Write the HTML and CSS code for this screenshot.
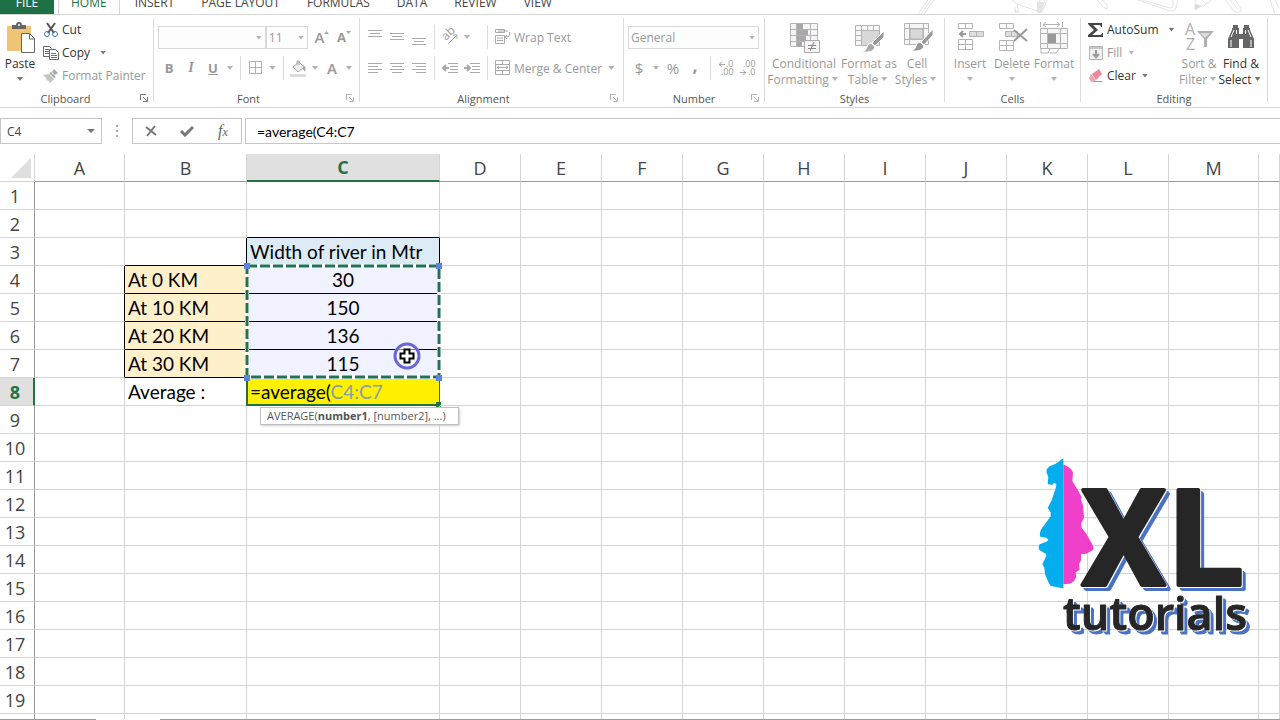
FILE: index.html
```
<!DOCTYPE html>
<html lang="en">

<head>
  <meta charset="UTF-8" />
  <title>Average width of river</title>
  <link rel="stylesheet" href="styles.css">
</head>

<body>
  <!-- tabs -->
  <nav class="tabs">
    <a href="#" class="file">FILE</a>
    <a href="#" class="active">HOME</a>
    <a href="#">INSERT</a>
    <a href="#">PAGE LAYOUT</a>
    <a href="#">FORMULAS</a>
    <a href="#">DATA</a>
    <a href="#">REVIEW</a>
    <a href="#">VIEW</a>
    <svg class="doodle" width="380" height="14" viewBox="0 0 380 14" fill="none" stroke="#e4e4e4">
      <path d="M18 14L28 0M21 14L31 0M24 14L34 0" />
      <path d="M112 0l5 4 20 7 3-11M137 12h5l5-12M141 12l4-12M117 4l2 9" />
      <path d="M114 6l4 7h-3z M137 2l7 0-3 11h-4z" fill="#e4e4e4" stroke="none" />
      <path d="M197 0l6 7 4 2v-4l-5-5" />
      <path d="M238 0l32 11q5 1 6-3l2-8M242 0l28 8q3 0 3-2V0" />
      <path d="M296 0l-1 9 13-6 3-3M302 0l4 4" />
      <path d="M295 4l6 2-6 4z" fill="#d8d8d8" />
      <path d="M325 0l9 11q4 3 7 0V8l-6-8M330 0l8 9M370 0l5 14M375 0l4 8" />
    </svg>
  </nav>

  <!-- ribbon -->
  <div class="ribbon">
    <section class="group clipboard">
      <div class="body">
        <button class="big paste">
          <svg width="30" height="32" viewBox="0 0 30 32">
            <path d="M2 4h24v25H2z" fill="#f0c477" />
            <path d="M7 7V3h4q0-3 3-3t3 3h4v4z" fill="#666" />
            <circle cx="14" cy="3" r="1" fill="#fff" />
            <path d="M16.500 11.500h8l5 5v14h-13z" fill="#fff" stroke="#666" />
            <path d="M24.500 12v5h5" fill="none" stroke="#666" />
          </svg>
          <span>Paste</span><i></i>
        </button>
        <div class="stack">
          <button class="line">
            <svg width="16" height="16" viewBox="0 0 16 16" fill="none">
              <path d="M4 1l7 10M12 1L5 11" stroke="#555" stroke-width="2" />
              <circle cx="4" cy="12" r="2.5" stroke="#3f72b5" />
              <circle cx="12" cy="12" r="2.5" stroke="#3f72b5" />
            </svg>Cut
          </button>
          <button class="line">
            <svg width="16" height="16" viewBox="0 0 16 16" fill="#fff" stroke="#666">
              <path d="M.5 1.500h6l2 2v8h-8z M2 4.500h4M2 6.500h4M2 8.500h4" />
              <path d="M6.500 4.500h6l3 3v7h-9z" />
              <path d="M8 8.500h5M8 10.500h6M8 12.500h6" stroke="#4a80b0" />
            </svg>Copy<i class="far"></i>
          </button>
          <button class="line" disabled>
            <svg width="16" height="16" viewBox="0 0 16 16" fill="#aaa">
              <path d="M9 4l2-3 4 4-3 2z M8 4l5 5-2 1-5-5z" />
              <path d="M0 7l6-1 5 5-4 4-2-3-1 1-1-3z" fill="#c4c4c4" />
            </svg>Format Painter
          </button>
        </div>
      </div>
      <h2>Clipboard</h2>
      <svg class="launch on" width="8" height="8" viewBox="0 0 8 8"><path d="M.5 6V.5H6M3 3l4 4M7.500 3v4.500H3" /></svg>
    </section>

    <section class="group font">
      <div class="rows">
        <div class="row">
          <label class="combo name"><select aria-label="Font" disabled><option></option></select></label>
          <label class="combo size"><select aria-label="Font size" disabled><option>11</option></select></label>
          <button class="ib gap" disabled aria-label="Increase font size"><b class="grow">A</b><svg width="5" height="12" viewBox="0 0 5 12"><path d="M0 3l2.500-3L5 3z" fill="#aaa" /></svg></button>
          <button class="ib" disabled aria-label="Decrease font size"><b>A</b><svg width="5" height="12" viewBox="0 0 5 12"><path d="M0 0h5L2.500 3z" fill="#aaa" /></svg></button>
        </div>
        <div class="row">
          <button class="ib" disabled><b>B</b></button>
          <button class="ib" disabled><em>I</em></button>
          <button class="ib" disabled><u>U</u></button><i></i>
          <hr>
          <button class="ib" disabled aria-label="Borders">
            <svg width="14" height="14" viewBox="0 0 14 14" fill="none" stroke="#b0b0b0"><path d="M.5.5h12v12H.5zM6.500 0v13M0 6.500h13" /></svg>
          </button><i></i>
          <hr>
          <button class="ib" disabled aria-label="Fill color">
            <svg width="17" height="17" viewBox="0 0 17 17"><path d="M3 7l6-5 5 5-6 5z M7 5V1h2v4" fill="#eee" stroke="#aaa" /><path d="M13 5q4 2 2 7l-2-3z" fill="#aaa" /><path d="M0 14h16v3H0z" fill="#dcdcdc" /></svg>
          </button><i></i>
          <button class="ib" disabled><b class="grow">A</b></button><i></i>
        </div>
      </div>
      <h2>Font</h2>
      <svg class="launch" width="8" height="8" viewBox="0 0 8 8"><path d="M.5 6V.5H6M3 3l4 4M7.500 3v4.500H3" /></svg>
    </section>

    <section class="group alignment">
      <div class="rows">
        <div class="row">
          <button class="ib" disabled aria-label="Top align"><svg class="ln" width="14" height="16" viewBox="0 0 14 16"><path d="M0 1.500h14M2 4.500h10M0 7.500h14" /></svg></button>
          <button class="ib" disabled aria-label="Middle align"><svg class="ln" width="14" height="16" viewBox="0 0 14 16"><path d="M0 4.500h14M2 7.500h10M0 10.500h14" /></svg></button>
          <button class="ib" disabled aria-label="Bottom align"><svg class="ln" width="14" height="16" viewBox="0 0 14 16"><path d="M0 9.500h14M2 12.500h10M0 15.500h14" /></svg></button>
          <hr>
          <button class="ib" disabled aria-label="Orientation">
            <svg class="ln ab" width="16" height="16" viewBox="0 0 16 16"><text x="4" y="12" transform="rotate(-45 4 12)">ab</text><path d="M6 15l9-9M11 6h4v4" /></svg>
          </button><i class="wide"></i>
          <hr>
          <button class="line" disabled>
            <svg class="ln" width="16" height="16" viewBox="0 0 16 16"><path d="M.5.5h9v3h-9zM3 2h10M.5 6.500h9v8h-9zM2 9h6M2 11.500h6M14.500 3v3q0 2-4 2M12 6l-2 2 2 2" /></svg>Wrap Text
          </button>
        </div>
        <div class="row">
          <button class="ib" disabled aria-label="Align left"><svg class="ln" width="14" height="12" viewBox="0 0 14 12"><path d="M0 1.500h14M0 4.500h10M0 7.500h14M0 10.500h10" /></svg></button>
          <button class="ib" disabled aria-label="Center"><svg class="ln" width="14" height="12" viewBox="0 0 14 12"><path d="M0 1.500h14M2 4.500h10M0 7.500h14M2 10.500h10" /></svg></button>
          <button class="ib" disabled aria-label="Align right"><svg class="ln" width="14" height="12" viewBox="0 0 14 12"><path d="M0 1.500h14M4 4.500h10M0 7.500h14M4 10.500h10" /></svg></button>
          <hr>
          <button class="ib" disabled aria-label="Decrease indent"><svg class="ln" width="16" height="12" viewBox="0 0 16 12"><path d="M6 1.500h10M8 4.500h8M8 7.500h8M6 10.500h10" /><path d="M7 6H1M4 3L1 6l3 3" stroke-width="2" /></svg></button>
          <button class="ib" disabled aria-label="Increase indent"><svg class="ln" width="16" height="12" viewBox="0 0 16 12"><path d="M6 1.500h10M8 4.500h8M8 7.500h8M6 10.500h10" /><path d="M0 6h6M3 3l3 3-3 3" stroke-width="2" /></svg></button>
          <hr>
          <button class="line" disabled>
            <svg class="ln" width="16" height="16" viewBox="0 0 16 16"><path d="M.5.5h14v14H.5zM0 4.500h15M0 10.500h15M7.500 0v4M7.500 11v4M2 7.500h11M4 6L2 7.500 4 9M11 6l2 1.500L11 9" /></svg>Merge &amp; Center<i></i>
          </button>
        </div>
      </div>
      <h2>Alignment</h2>
      <svg class="launch" width="8" height="8" viewBox="0 0 8 8"><path d="M.5 6V.5H6M3 3l4 4M7.500 3v4.500H3" /></svg>
    </section>

    <section class="group number">
      <div class="rows">
        <div class="row">
          <label class="combo format"><select aria-label="Number format" disabled><option>General</option></select></label>
        </div>
        <div class="row">
          <button class="ib sym" disabled>$</button><i></i>
          <button class="ib sym" disabled>%</button>
          <button class="ib comma" disabled>,</button>
          <hr>
          <button class="ib" disabled aria-label="Increase decimal">
            <svg class="ln" width="16" height="16" viewBox="0 0 16 16"><path d="M1 4.500h6M4 2L1 4.500 4 7" /><text x="8" y="7">.0</text><text x="3" y="15">.00</text></svg>
          </button>
          <button class="ib" disabled aria-label="Decrease decimal">
            <svg class="ln" width="16" height="16" viewBox="0 0 16 16"><text x="3" y="7">.00</text><path d="M0 12.500h6M3 10l3 2.500L3 15" /><text x="8" y="15">.0</text></svg>
          </button>
        </div>
      </div>
      <h2>Number</h2>
      <svg class="launch" width="8" height="8" viewBox="0 0 8 8"><path d="M.5 6V.5H6M3 3l4 4M7.500 3v4.500H3" /></svg>
    </section>

    <section class="group styles">
      <div class="body">
        <button class="big w70" disabled>
          <svg width="32" height="32" viewBox="0 0 32 32" fill="#f6f4f6" stroke="#b4b4b4">
            <path d="M2.500 1.500h27v23h-27zM8.500 1v24M22.500 1v24M2 7.500h27M2 13.500h27M2 19.500h27" />
            <path d="M9 2h6v5H9zM9 8h11v5H9zM9 14h9v5H9zM9 20h5v5H9z" fill="#a8a8a8" stroke="none" />
            <path d="M16.500 18.500h15v12h-15z" stroke="#aaa" />
            <path d="M20 23.500h8M20 26.500h8M26 20l-4 9" stroke="#888" />
          </svg>
          <span>Conditional<br>Formatting<i></i></span>
        </button>
        <button class="big w54" disabled>
          <svg width="32" height="32" viewBox="0 0 32 32" fill="#f6f6f6" stroke="#b4b4b4">
            <path d="M2.500 3.500h24v20h-24zM8.500 3v21M14.500 3v21M20.500 3v21M2 8.500h25M2 13.500h25M2 18.500h25" />
            <path d="M9 9h17v14H9z" fill="#d8d8d8" stroke="none" />
            <path d="M31 9v6l-9 9-3-3z" fill="#999" stroke="#fff" />
            <path d="M18 21l4 4q-1 6-13 5 5-2 5-5 0-3 4-4z" fill="#aaa" stroke="#fff" />
          </svg>
          <span>Format as<br>Table<i></i></span>
        </button>
        <button class="big w42" disabled>
          <svg width="32" height="32" viewBox="0 0 32 32" fill="#f6f6f6" stroke="#b4b4b4">
            <path d="M3.500 1.500h24v21h-24zM8.500 1v21M22.500 1v21M3 6.500h24M3 17.500h24" />
            <path d="M9 7h13v10H9z" fill="#d8d8d8" />
            <path d="M32 7v6l-9 10-3-3z" fill="#999" stroke="#fff" />
            <path d="M19 20l4 4q-1 6-13 5 5-2 5-5 0-3 4-4z" fill="#999" stroke="#fff" />
          </svg>
          <span>Cell<br>Styles<i></i></span>
        </button>
      </div>
      <h2>Styles</h2>
    </section>

    <section class="group cells">
      <div class="body">
        <button class="big w42" disabled>
          <svg width="32" height="32" viewBox="0 0 32 32" fill="#fff" stroke="#b4b4b4">
            <path d="M4.500 1.500h14v5h-14zM11.500 1v6M4.500 17.500h14v10h-14zM11.500 17v11M4 22.500h15" />
            <path d="M15.500 9.500h14v5h-14zM22.500 9v6" fill="#ddd" />
            <path d="M12 12H6M9 9l-3 3 3 3" fill="none" stroke="#999" stroke-width="2" />
          </svg>
          <span>Insert</span><i></i>
        </button>
        <button class="big w42" disabled>
          <svg width="32" height="32" viewBox="0 0 32 32" fill="#fff" stroke="#b4b4b4">
            <path d="M3.500 1.500h14v5h-14zM10.500 1v6M3.500 18.500h14v10h-14zM10.500 18v11M3 23.500h15" />
            <path d="M9.500 9.500h12v5h-12zM15.500 9v6" fill="#ddd" />
            <path d="M18 8l13 11M31 7L18 19" fill="none" stroke="#999" stroke-width="2" />
          </svg>
          <span>Delete</span><i></i>
        </button>
        <button class="big w42" disabled>
          <svg width="32" height="32" viewBox="0 0 32 32" fill="#f6f6f6" stroke="#b4b4b4">
            <path d="M2.500 6.500h27v20h-27zM9.500 6v20M22.500 6v20M2 11.500h27M2 21.500h27" />
            <path d="M10 12h8v9h-8z" fill="#999" stroke="none" />
            <path d="M2.500 0v5M24.500 0v5M5 2.500h17M8 0L5 2.500 8 5M19 0l3 2.500L19 5M3 27v4h7l2-4M12 31h6l3-4" fill="none" />
          </svg>
          <span>Format</span><i></i>
        </button>
      </div>
      <h2>Cells</h2>
    </section>

    <section class="group editing">
      <div class="body">
        <div class="stack">
          <button class="line">
            <svg width="16" height="16" viewBox="0 0 16 16"><path d="M0 1h14v4h-1q0-2-2-2H5l5 5-6 5h8q2 0 2-2h1v4H0v-2l6-5-6-6z" fill="#444" /></svg>AutoSum<i class="far"></i>
          </button>
          <button class="line" disabled>
            <svg width="16" height="16" viewBox="0 0 16 16" fill="#f2f2f2" stroke="#b4b4b4"><path d="M1.500 1.500h13v13h-13z" /><path d="M2 2h12v2H2z" fill="#c8c8c8" stroke="none" /><path d="M8 5v7M5 9l3 3 3-3" fill="none" stroke="#999" stroke-width="2" /></svg>Fill<i></i>
          </button>
          <button class="line">
            <svg width="16" height="16" viewBox="0 0 16 16"><path d="M4 6l7-5 3 5-6 6z" fill="#e88b9a" /><path d="M3 6l5 6-2 2H3l-2-4z" fill="#f0a5b0" /><path d="M6 13.500h8" stroke="#999" /></svg>Clear<i></i>
          </button>
        </div>
        <button class="big w42" disabled>
          <svg class="az" width="32" height="32" viewBox="0 0 32 32">
            <text x="2" y="13">A</text><text x="3" y="28">Z</text>
            <path d="M14 9h17l-7 8v8h-3v-8z" fill="#b0b0b0" /><path d="M17 11h10l-5 5z" fill="#ddd" />
          </svg>
          <span>Sort &amp;<br>Filter<i></i></span>
        </button>
        <button class="big w42">
          <svg width="32" height="32" viewBox="0 0 32 32" fill="#666">
            <path d="M3 26V17l4-9V6h1V3h5v3h1v6h4V6h1V3h5v3h1v2l4 9v9H18v-9h-4v9z" />
            <path d="M6 18v7M11.500 8v4M20.500 8v4M26 18v7M9 8l-3 7M23 8l3 7" stroke="#fff" />
          </svg>
          <span>Find &amp;<br>Select<i></i></span>
        </button>
      </div>
      <h2>Editing</h2>
    </section>
  </div>

  <!-- formula bar -->
  <div class="formula-bar">
    <label class="name-box"><input type="text" value="C4" aria-label="Name box"></label>
    <span class="dots"></span>
    <div class="fx">
      <button aria-label="Cancel"><svg width="12" height="12" viewBox="0 0 12 12"><path d="M1 2l10 8M10 1L2 11" stroke="#777" stroke-width="2" /></svg></button>
      <button aria-label="Enter"><svg width="14" height="12" viewBox="0 0 14 12"><path d="M1 6l4 4 8-8" fill="none" stroke="#777" stroke-width="3" /></svg></button>
      <button aria-label="Insert function"><em>f</em><small>x</small></button>
    </div>
    <input class="formula" type="text" value="=average(C4:C7" aria-label="Formula">
  </div>

  <!-- sheet -->
  <main class="sheet">
    <table>
      <colgroup>
        <col class="c-head"><col class="c-a"><col class="c-b"><col class="c-c">
        <col class="c-std" span="9"><col class="c-a"><col>
      </colgroup>
      <thead>
        <tr>
          <th><svg width="20" height="20" viewBox="0 0 20 20"><path d="M20 0v20H0z" fill="#dfdfdf" /></svg></th>
          <th>A</th><th>B</th><th class="on">C</th><th>D</th><th>E</th><th>F</th><th>G</th><th>H</th><th>I</th><th>J</th><th>K</th><th>L</th><th>M</th><th></th>
        </tr>
      </thead>
      <tbody>
        <tr><th>1</th><td></td><td></td><td></td><td></td><td></td><td></td><td></td><td></td><td></td><td></td><td></td><td></td><td></td><td></td></tr>
        <tr><th>2</th><td></td><td></td><td class="bb"></td><td></td><td></td><td></td><td></td><td></td><td></td><td></td><td></td><td></td><td></td><td></td></tr>
        <tr><th>3</th><td></td><td class="bb br"></td><td class="title bb br">Width of river in Mtr</td><td></td><td></td><td></td><td></td><td></td><td></td><td></td><td></td><td></td><td></td><td></td></tr>
        <tr>
          <th>4</th><td class="br"></td><td class="km bb br">At 0 KM</td>
          <td class="val bb br">30
            <svg class="ants">
              <rect class="white" width="100%" height="100%" />
              <rect class="dash" width="100%" height="100%" />
            </svg>
            <span class="knob tl"></span><span class="knob tr"></span><span class="knob bl"></span><span class="knob brt"></span>
          </td>
          <td></td><td></td><td></td><td></td><td></td><td></td><td></td><td></td><td></td><td></td><td></td>
        </tr>
        <tr><th>5</th><td class="br"></td><td class="km bb br">At 10 KM</td><td class="val bb br">150</td><td></td><td></td><td></td><td></td><td></td><td></td><td></td><td></td><td></td><td></td><td></td></tr>
        <tr><th>6</th><td class="br"></td><td class="km bb br">At 20 KM</td><td class="val bb br">136</td><td></td><td></td><td></td><td></td><td></td><td></td><td></td><td></td><td></td><td></td><td></td></tr>
        <tr>
          <th>7</th><td class="br"></td><td class="km bb br">At 30 KM</td>
          <td class="val bb br">115
            <svg class="cursor" width="28" height="28" viewBox="0 0 28 28">
              <circle cx="14" cy="14" r="12" fill="#fff" fill-opacity=".5" stroke="#6a66d8" stroke-width="3" />
              <path d="M11.500 7.500h5v4h4v5h-4v4h-5v-4h-4v-5h4z" fill="#fff" stroke="#000" stroke-width="2" />
            </svg>
          </td>
          <td></td><td></td><td></td><td></td><td></td><td></td><td></td><td></td><td></td><td></td><td></td>
        </tr>
        <tr>
          <th class="on">8</th><td></td><td>Average :</td>
          <td class="edit">=average(<span>C4:C7</span>
            <div class="handle"></div>
            <div class="tip">AVERAGE(<b>number1</b>, [number2], ...)</div>
          </td>
          <td></td><td></td><td></td><td></td><td></td><td></td><td></td><td></td><td></td><td></td><td></td>
        </tr>
        <tr><th>9</th><td></td><td></td><td></td><td></td><td></td><td></td><td></td><td></td><td></td><td></td><td></td><td></td><td></td><td></td></tr>
        <tr><th>10</th><td></td><td></td><td></td><td></td><td></td><td></td><td></td><td></td><td></td><td></td><td></td><td></td><td></td><td></td></tr>
        <tr><th>11</th><td></td><td></td><td></td><td></td><td></td><td></td><td></td><td></td><td></td><td></td><td></td><td></td><td></td><td></td></tr>
        <tr><th>12</th><td></td><td></td><td></td><td></td><td></td><td></td><td></td><td></td><td></td><td></td><td></td><td></td><td></td><td></td></tr>
        <tr><th>13</th><td></td><td></td><td></td><td></td><td></td><td></td><td></td><td></td><td></td><td></td><td></td><td></td><td></td><td></td></tr>
        <tr><th>14</th><td></td><td></td><td></td><td></td><td></td><td></td><td></td><td></td><td></td><td></td><td></td><td></td><td></td><td></td></tr>
        <tr><th>15</th><td></td><td></td><td></td><td></td><td></td><td></td><td></td><td></td><td></td><td></td><td></td><td></td><td></td><td></td></tr>
        <tr><th>16</th><td></td><td></td><td></td><td></td><td></td><td></td><td></td><td></td><td></td><td></td><td></td><td></td><td></td><td></td></tr>
        <tr><th>17</th><td></td><td></td><td></td><td></td><td></td><td></td><td></td><td></td><td></td><td></td><td></td><td></td><td></td><td></td></tr>
        <tr><th>18</th><td></td><td></td><td></td><td></td><td></td><td></td><td></td><td></td><td></td><td></td><td></td><td></td><td></td><td></td></tr>
        <tr><th>19</th><td></td><td></td><td></td><td></td><td></td><td></td><td></td><td></td><td></td><td></td><td></td><td></td><td></td><td></td></tr>
        <tr><th></th><td></td><td></td><td></td><td></td><td></td><td></td><td></td><td></td><td></td><td></td><td></td><td></td><td></td><td></td></tr>
      </tbody>
    </table>

    <!-- channel logo -->
    <svg class="logo" width="220" height="190" viewBox="0 0 220 190">
      <svg x="8" y="7" width="57" height="134" viewBox="55 50 171 402">
        <path fill="#04aeee" d="M131 54L120 62 108 70 90 78Q78 86 81 98L86 110 84 131 97 134 103 128 110 130 109 140 96 180 84 203 93 216 93 228 65 266Q58 280 62 289L80 292 86 299 80 304 60 312Q54 322 60 330L78 340 80 346 68 372 74 382 76 402 86 425 92 436 128 444H131z" />
        <path fill="#f03fca" d="M131 72L142 78Q158 86 160 98L158 122 172 145 186 170 184 178 190 195 193 232 184 250 186 262 200 280 221 318V328L200 340 184 342V360L178 372 180 388 168 396 170 408Q164 428 150 430L131 432z" />
      </svg>
      <g class="letters">
        <text class="xl" x="51" y="135">X</text>
        <text class="xl" x="140" y="135">L</text>
        <text class="tut" x="33" y="180">tutorials</text>
      </g>
    </svg>
  </main>

  <footer class="sheet-tabs"><span></span></footer>
</body>

</html>
```
FILE: styles.css
```
* {
  box-sizing: border-box;
}

body {
  margin: 0;
  height: 100vh;
  overflow: hidden;
  display: flex;
  flex-direction: column;
  background-color: #fff;
  color: #444;
  font-family: "Open Sans", "Noto Sans", sans-serif;
  font-size: 12px;
}

button {
  border: none;
  background: none;
  padding: 0;
  color: #333;
  font-family: inherit;
  font-size: 12px;
}

button:disabled {
  color: #999;
}

/* small drop-down arrow */
i {
  flex: none;
  width: 12px;
  height: 4px;
  background-color: #777;
  clip-path: polygon(3px 0, 9px 0, 6px 4px);
}

button:disabled i,
.row > i {
  background-color: #b4b4b4;
}

/* tabs */
.tabs {
  flex: none;
  display: flex;
  height: 15px;
  overflow: hidden;
  border-bottom: 1px solid #d5d5d5;
}

.tabs a {
  flex: none;
  height: 15px;
  margin-right: 3px;
  padding: 0 12px;
  line-height: 6px;
  color: #444;
  text-decoration: none;
}

.tabs .file {
  width: 54px;
  margin-right: 4px;
  background-color: #1e7145;
  color: #fff;
  text-align: center;
}

.tabs .active {
  border: 1px solid #d5d5d5;
  border-width: 0 1px;
  color: #217346;
}

.doodle {
  margin-left: auto;
}

/* ribbon */
.ribbon {
  flex: none;
  display: flex;
  height: 93px;
  border-bottom: 1px solid #d5d5d5;
}

.group {
  flex: none;
  position: relative;
  margin: 3px 0 5px;
  border-right: 1px solid #dcdcdc;
}

.clipboard { width: 154px; }
.font { width: 206px; }
.alignment { width: 264px; }
.number { width: 141px; }
.styles { width: 180px; }
.cells { width: 136px; }
.editing { width: 187px; }

.group h2 {
  margin: 0;
  text-align: center;
  font-size: 11px;
  font-weight: normal;
  line-height: 16px;
  color: #555;
}

.clipboard h2 {
  padding-right: 22px;
}

.font h2,
.alignment h2 {
  padding-right: 16px;
}

.launch {
  position: absolute;
  right: 5px;
  bottom: 0;
  fill: none;
  stroke: #b4b4b4;
}

.launch.on {
  stroke: #777;
}

.body {
  display: flex;
  height: 73px;
}

.rows {
  height: 73px;
  padding: 7px 4px 0;
}

.row {
  display: flex;
  align-items: center;
  height: 24px;
  margin-bottom: 7px;
}

.row hr {
  width: 1px;
  height: 24px;
  margin: 0 4px;
  border: none;
  background-color: #dcdcdc;
}

.row .wide {
  margin-right: 10px;
}

.big {
  display: flex;
  flex-direction: column;
  align-items: center;
  padding-top: 4px;
  line-height: 16px;
  white-space: nowrap;
}

.big svg {
  flex: none;
  margin-bottom: 2px;
}

.big span i {
  display: inline-block;
  margin-bottom: 3px;
}

.big > i {
  margin-top: 5px;
}

.paste { width: 40px; }
.w70 { width: 76px; }
.w54 { width: 54px; }
.w42 { width: 42px; }

.styles .body { padding-left: 1px; }
.cells .body { padding-left: 4px; }

.stack {
  display: flex;
  flex-direction: column;
}

.line {
  display: flex;
  align-items: center;
  height: 23px;
  padding-left: 3px;
  gap: 3px;
  white-space: nowrap;
}

.line .far {
  margin-left: 4px;
}

.editing .stack {
  width: 97px;
  padding-left: 4px;
}

.ib {
  flex: none;
  display: flex;
  align-items: center;
  justify-content: center;
  width: 22px;
  height: 22px;
  font-size: 13px;
}

.ib em {
  font-family: "Liberation Serif", serif;
  font-weight: bold;
  font-size: 14px;
}

.ib u {
  font-weight: bold;
}

.ib .grow {
  font-size: 15px;
  font-weight: 600;
}

.gap {
  margin-left: 3px;
}

.sym {
  font-size: 15px;
}

.comma {
  padding-bottom: 6px;
  font-size: 18px;
  font-weight: bold;
}

.ln {
  fill: none;
  stroke: #aaa;
  overflow: visible;
}

.ln text {
  fill: #999;
  stroke: none;
  font-size: 9px;
}

.ab text {
  font-size: 12px;
}

.az text {
  fill: #b0b0b0;
  font-size: 16px;
}

.combo {
  position: relative;
  height: 23px;
}

.combo.name { width: 110px; }
.combo.size { width: 43px; }
.combo.format { width: 131px; }

.combo::after {
  content: "";
  position: absolute;
  right: 4px;
  top: 10px;
  width: 6px;
  height: 4px;
  background-color: #b4b4b4;
  clip-path: polygon(0 0, 100% 0, 50% 100%);
}

.combo select {
  appearance: none;
  width: 100%;
  height: 23px;
  padding: 0 2px;
  border: 1px solid #d8d8d8;
  border-radius: 0;
  background-color: #fdfdfd;
  color: #999;
  opacity: 1;
  font-family: inherit;
  font-size: 12px;
}

/* formula bar */
.formula-bar {
  flex: none;
  display: flex;
  height: 46px;
  padding-top: 10px;
}

.formula-bar input {
  height: 26px;
  border: 1px solid #c6c6c6;
  background-color: #fff;
  outline: none;
}

.name-box {
  position: relative;
}

.name-box input {
  width: 102px;
  padding: 0 6px;
  color: #444;
  font-family: inherit;
  font-size: 12px;
}

.name-box::after {
  content: "";
  position: absolute;
  right: 7px;
  top: 11px;
  width: 8px;
  height: 4px;
  background-color: #777;
  clip-path: polygon(0 0, 100% 0, 50% 100%);
}

.dots {
  width: 2px;
  height: 12px;
  margin: 7px 14px 0;
  background: repeating-linear-gradient(#aaa 0 2px, #fff 2px 5px);
}

.fx {
  display: flex;
  width: 110px;
  height: 26px;
  margin-right: 3px;
  border: 1px solid #c6c6c6;
}

.fx button {
  flex: 1;
  color: #666;
  font-family: "Liberation Serif", serif;
  font-style: italic;
}

.fx svg {
  display: block;
  margin: 0 auto;
}

.fx em {
  font-size: 16px;
}

.fx small {
  font-size: 12px;
}

.formula-bar .formula {
  flex: 1;
  padding: 0 11px;
  border-right: none;
  color: #000;
  font-family: Lato, sans-serif;
  font-size: 14px;
}

/* sheet */
.sheet {
  flex: 1;
  min-height: 0;
  position: relative;
  overflow: hidden;
}

table {
  width: 100%;
  table-layout: fixed;
  border-collapse: separate;
  border-spacing: 0;
}

.c-head { width: 35px; }
.c-a { width: 90px; }
.c-b { width: 122px; }
.c-c { width: 193px; }
.c-std { width: 81px; }

th,
td {
  height: 28px;
  padding: 0;
  border: 0 solid #d4d4d4;
  border-width: 0 1px 1px 0;
  line-height: 26px;
}

th {
  font-size: 18px;
  font-weight: normal;
}

thead th {
  border-bottom-color: #9b9b9b;
}

thead th:first-child {
  border-bottom-color: #d4d4d4;
}

thead svg {
  display: block;
  margin-left: 11px;
}

tbody th {
  padding-right: 4px;
  border-right-color: #9b9b9b;
}

th.on {
  background-color: #e0e0e0;
  color: #217346;
  font-weight: bold;
}

thead th.on {
  border-bottom: 2px solid #217346;
}

tbody th.on {
  padding-right: 3px;
  border-right: 2px solid #217346;
}

td {
  position: relative;
  padding-left: 3px;
  color: #000;
  font-family: Lato, sans-serif;
  font-size: 19px;
  white-space: nowrap;
}

.bb { border-bottom-color: #000; }
.br { border-right-color: #000; }

.title {
  background-color: #ddebf7;
}

.km {
  background-color: #fff0cc;
}

.val {
  padding: 0;
  background-color: #f0f2ff;
  text-align: center;
}

.edit {
  background-color: #fff000;
  box-shadow: inset 1px -1px #217346, -1px 0 #217346;
  border-color: #217346;
}

.edit span {
  color: #8a9fa0;
}

.handle {
  position: absolute;
  right: -2px;
  bottom: -2px;
  width: 5px;
  height: 5px;
  background-color: #217346;
}

/* marching ants round C4:C7 */
.ants {
  position: absolute;
  z-index: 1;
  left: 0;
  top: 0;
  width: 192px;
  height: 111px;
  overflow: visible;
  fill: none;
}

.ants .white {
  stroke: #fff;
  stroke-width: 4px;
}

.ants .dash {
  stroke: #217356;
  stroke-width: 3px;
  stroke-dasharray: 10 3;
}

.knob {
  position: absolute;
  z-index: 1;
  width: 6px;
  height: 6px;
  background-color: #5b86d8;
}

.tl { left: -3px; top: -3px; }
.tr { right: -3px; top: -3px; }
.bl { left: -3px; top: 109px; }
.brt { right: -3px; top: 109px; }

.cursor {
  position: absolute;
  z-index: 2;
  right: 18px;
  top: -8px;
}

.tip {
  position: absolute;
  z-index: 2;
  left: 13px;
  top: 29px;
  padding: 0 12px 0 6px;
  border: 1px solid #c0c0c0;
  background-color: #fff;
  box-shadow: 1px 1px 2px #ccc;
  color: #555;
  font-family: "Open Sans", sans-serif;
  font-size: 11px;
  line-height: 16px;
}

.logo {
  position: absolute;
  right: 30px;
  bottom: 79px;
}

.letters {
  fill: #262626;
  stroke: #262626;
  stroke-linejoin: round;
  font-weight: bold;
  filter: drop-shadow(1px 1px 0 #fff) drop-shadow(3px 3px 0 #4a72c4);
}

.xl {
  font-family: Roboto, sans-serif;
  font-size: 134px;
  stroke-width: 4px;
}

.tut {
  font-family: "Open Sans", sans-serif;
  font-size: 45px;
  font-weight: 600;
  stroke-width: 1px;
}

/* top edge of the sheet tab strip */
.sheet-tabs {
  flex: none;
  height: 1px;
  padding-left: 96px;
  background-color: #9b9b9b;
}

.sheet-tabs span {
  display: block;
  width: 64px;
  height: 1px;
  background-color: #fff;
}
```
